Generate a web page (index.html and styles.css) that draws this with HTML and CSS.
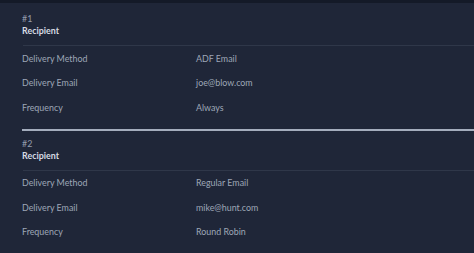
FILE: index.html
```html
<!DOCTYPE html>
<html lang="en">
<head>
    <meta charset="UTF-8">
    <meta name="viewport" content="width=device-width, initial-scale=1.0">
    <title>Recipients</title>
    <link rel="stylesheet" href="styles.css">
</head>
<body>

    <div class="recipient-list">
        <!-- Recipient 1 -->
        <div class="recipient">
            <div class="recipient-header">
                <div class="recipient-number">#1</div>
                <div class="recipient-title">Recipient</div>
            </div>
            <div class="detail-row">
                <span class="detail-label">Delivery Method</span>
                <span class="detail-value">ADF Email</span>
            </div>
            <div class="detail-row">
                <span class="detail-label">Delivery Email</span>
                <span class="detail-value">joe@blow.com</span>
            </div>
            <div class="detail-row">
                <span class="detail-label">Frequency</span>
                <span class="detail-value">Always</span>
            </div>
        </div>

        <!-- Recipient 2 -->
        <div class="recipient">
            <div class="recipient-header">
                <div class="recipient-number">#2</div>
                <div class="recipient-title">Recipient</div>
            </div>
            <div class="detail-row">
                <span class="detail-label">Delivery Method</span>
                <span class="detail-value">Regular Email</span>
            </div>
            <div class="detail-row">
                <span class="detail-label">Delivery Email</span>
                <span class="detail-value">mike@hunt.com</span>
            </div>
            <div class="detail-row">
                <span class="detail-label">Frequency</span>
                <span class="detail-value">Round Robin</span>
            </div>
        </div>
    </div>

</body>
</html>
```

FILE: styles.css
```css
body {
    font-family: Lato, "Noto Sans", sans-serif;
    font-size: 8.9px;
    margin: 0;
    background: #1f2638;
    border-top: 3px solid #141a28;
    color: #9ea6b7;
    min-height: 250px;
}

.recipient-list {
    padding-left: 22px;
}

.recipient {
    padding-top: 10px;
    padding-bottom: 9px;
}

.recipient + .recipient {
    border-top: 2px solid #a4adbd;
    padding-top: 7px;
}

.recipient-header {
    line-height: 12px;
    padding-bottom: 8px;
    border-bottom: 1px solid #2f3749;
    margin-left: 1px;
}

.recipient-number {
    color: #949cad;
    margin-left: -1px;
}

.recipient-title {
    font-weight: bold;
    color: #d6dbe4;
    margin-left: -1px;
}

.detail-row {
    display: flex;
    align-items: center;
    height: 24.5px;
}

.detail-label {
    width: 174px;
}
```
